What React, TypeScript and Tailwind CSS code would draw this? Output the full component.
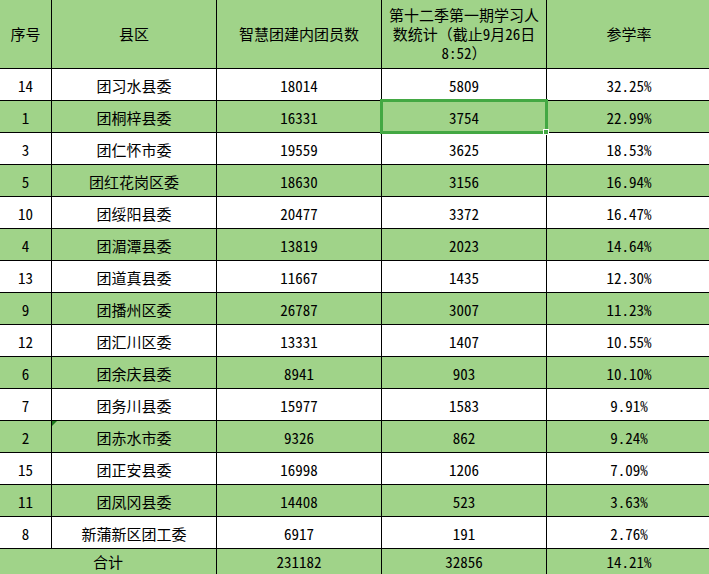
import React from "react";

type Row = [string, string, string, string, string];

const rows: Row[] = [
  ["14", "团习水县委", "18014", "5809", "32.25%"],
  ["1", "团桐梓县委", "16331", "3754", "22.99%"],
  ["3", "团仁怀市委", "19559", "3625", "18.53%"],
  ["5", "团红花岗区委", "18630", "3156", "16.94%"],
  ["10", "团绥阳县委", "20477", "3372", "16.47%"],
  ["4", "团湄潭县委", "13819", "2023", "14.64%"],
  ["13", "团道真县委", "11667", "1435", "12.30%"],
  ["9", "团播州区委", "26787", "3007", "11.23%"],
  ["12", "团汇川区委", "13331", "1407", "10.55%"],
  ["6", "团余庆县委", "8941", "903", "10.10%"],
  ["7", "团务川县委", "15977", "1583", "9.91%"],
  ["2", "团赤水市委", "9326", "862", "9.24%"],
  ["15", "团正安县委", "16998", "1206", "7.09%"],
  ["11", "团凤冈县委", "14408", "523", "3.63%"],
  ["8", "新蒲新区团工委", "6917", "191", "2.76%"],
];

const font = {
  fontFamily:
    '"Noto Sans Mono CJK SC", "Noto Sans CJK SC", "DejaVu Sans Mono", monospace',
};

export default function App() {
  return (
    <div
      className="relative w-[709px] h-[574px] overflow-hidden bg-white text-[15px] text-black"
      style={font}
    >
      <div className="grid grid-cols-[52px_165px_165px_165px_165px]">
        {/* header */}
        <div className="h-[69px] bg-[#a0d389] border-r border-b border-black flex items-center justify-center">
          序号
        </div>
        <div className="h-[69px] bg-[#a0d389] border-r border-b border-black flex items-center justify-center">
          县区
        </div>
        <div className="h-[69px] bg-[#a0d389] border-r border-b border-black flex items-center justify-center">
          智慧团建内团员数
        </div>
        <div className="h-[69px] bg-[#a0d389] border-r border-b border-black flex flex-col items-center justify-center text-center leading-[18px] gap-[1px]">
          <div>第十二季第一期学习人</div>
          <div>数统计（截止9月26日</div>
          <div>8:52）</div>
        </div>
        <div className="h-[69px] bg-[#a0d389] border-r border-b border-black flex items-center justify-center">
          参学率
        </div>

        {rows.map((r, i) => {
          const bg = i % 2 === 1 ? "bg-[#a0d389]" : "bg-white";
          return (
            <React.Fragment key={i}>
              {r.map((c, j) => (
                <div
                  key={j}
                  className={`relative h-[32px] ${bg} border-r border-b border-black flex items-center justify-center pt-[3px]`}
                >
                  {c}
                  {i === 11 && j === 1 && (
                    <svg
                      className="absolute left-0 top-0"
                      width="5"
                      height="5"
                      viewBox="0 0 5 5"
                    >
                      <polygon points="0,0 5,0 0,5" fill="#1f7a1f" />
                    </svg>
                  )}
                </div>
              ))}
            </React.Fragment>
          );
        })}

        {/* total */}
        <div className="col-span-2 h-[26px] bg-[#a0d389] border-r border-black flex items-center justify-center">
          合计
        </div>
        <div className="h-[26px] bg-[#a0d389] border-r border-black flex items-center justify-center">
          231182
        </div>
        <div className="h-[26px] bg-[#a0d389] border-r border-black flex items-center justify-center">
          32856
        </div>
        <div className="h-[26px] bg-[#a0d389] border-r border-black flex items-center justify-center">
          14.21%
        </div>
      </div>

      {/* selection */}
      <div className="absolute left-[380px] top-[99px] w-[168px] h-[35px] border-[3px] border-[#43a843] pointer-events-none" />
      <div className="absolute left-[543px] top-[129px] w-[6px] h-[6px] bg-[#43a843] border border-white" />
    </div>
  );
}
